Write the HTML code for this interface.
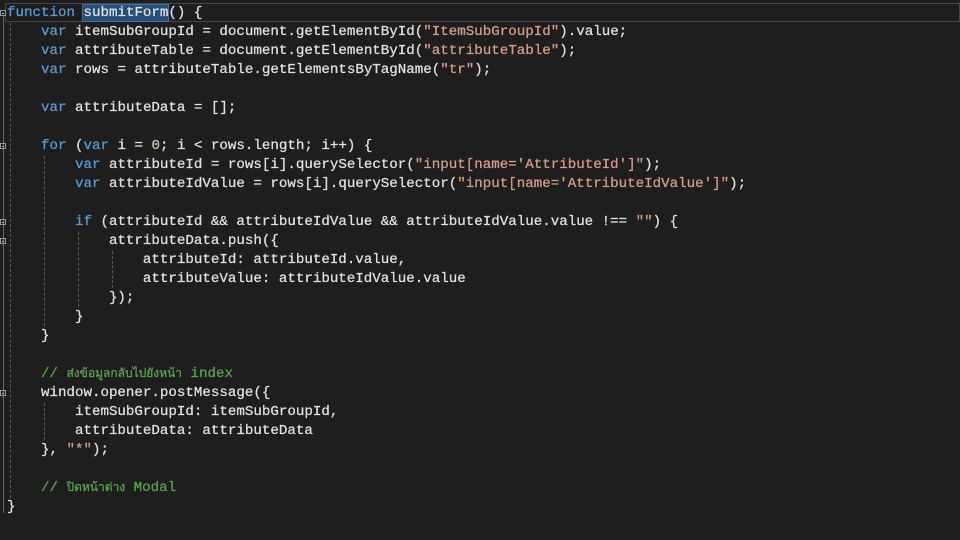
<!DOCTYPE html>
<html><head><meta charset="utf-8"><style>
body{margin:0;background:#1e1e1e;width:960px;height:540px;overflow:hidden;position:relative}
pre{position:absolute;left:7px;top:4px;margin:0;font-family:"Liberation Mono","Noto Sans CJK SC",monospace;font-size:14.17px;line-height:19px;color:#e0e0e0;white-space:pre;-webkit-text-stroke:0.25px currentColor}
.k{color:#569cd6}.s{color:#d69d85}.c{color:#57a64a}.n{color:#b5cea8}
.sel{background:#264f78;outline:1px solid #4a6f98}
.m{position:absolute;left:0;width:6px;height:6px;border:1px solid #999;box-sizing:border-box}
.m:after{content:"";position:absolute;left:1px;top:2px;width:2px;height:1px;background:#bbb}
.vl{position:absolute;left:3px;width:1px;background:#666}
.g{position:absolute;width:0;border-left:1px dashed #5a5a5a}
.top{position:absolute;left:5px;top:3px;width:955px;height:19px;border:1px solid #464646;box-sizing:border-box}
</style></head><body>
<div class="top"></div>
<div class="vl" style="top:16px;height:497px"></div>
<div class="m" style="top:10px"></div>
<div class="m" style="top:143px"></div>
<div class="m" style="top:219px"></div>
<div class="m" style="top:238px"></div>
<div class="m" style="top:390px"></div>
<div class="g" style="left:10px;top:23px;height:475px"></div>
<div class="g" style="left:44px;top:156px;height:170px"></div>
<div class="g" style="left:78px;top:232px;height:75px"></div>
<div class="g" style="left:112px;top:251px;height:37px"></div>
<div class="g" style="left:44px;top:403px;height:37px"></div>
<pre><span class="k">function</span> <span class="sel">submitForm</span>() {
    <span class="k">var</span> itemSubGroupId = document.getElementById(<span class="s">"ItemSubGroupId"</span>).value;
    <span class="k">var</span> attributeTable = document.getElementById(<span class="s">"attributeTable"</span>);
    <span class="k">var</span> rows = attributeTable.getElementsByTagName(<span class="s">"tr"</span>);

    <span class="k">var</span> attributeData = [];

    <span class="k">for</span> (<span class="k">var</span> i = <span class="n">0</span>; i &lt; rows.length; i++) {
        <span class="k">var</span> attributeId = rows[i].querySelector(<span class="s">"input[name='AttributeId']"</span>);
        <span class="k">var</span> attributeIdValue = rows[i].querySelector(<span class="s">"input[name='AttributeIdValue']"</span>);

        <span class="k">if</span> (attributeId &amp;&amp; attributeIdValue &amp;&amp; attributeIdValue.value !== <span class="s">""</span>) {
            attributeData.push({
                attributeId: attributeId.value,
                attributeValue: attributeIdValue.value
            });
        }
    }

    <span class="c">// <span style="font-size:12px">ส่งข้อมูลกลับไปยังหน้า</span> index</span>
    window.opener.postMessage({
        itemSubGroupId: itemSubGroupId,
        attributeData: attributeData
    }, <span class="s">"*"</span>);

    <span class="c">// <span style="font-size:12px">ปิดหน้าต่าง</span> Modal</span>
}</pre>
</body></html>
